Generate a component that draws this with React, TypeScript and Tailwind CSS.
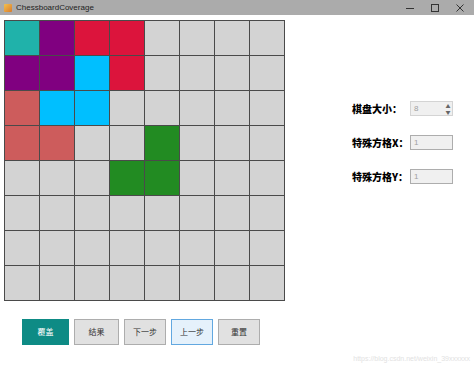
import React from "react";

// colours of the tiles, row by row
const L = "#d3d3d3";
const T = "#20b2aa";
const P = "#800080";
const C = "#dc143c";
const S = "#00bfff";
const R = "#cd5c5c";
const G = "#228b22";

const board: string[][] = [
  [T, P, C, C, L, L, L, L],
  [P, P, S, C, L, L, L, L],
  [R, S, S, L, L, L, L, L],
  [R, R, L, L, G, L, L, L],
  [L, L, L, G, G, L, L, L],
  [L, L, L, L, L, L, L, L],
  [L, L, L, L, L, L, L, L],
  [L, L, L, L, L, L, L, L],
];

const font = { fontFamily: '"Microsoft YaHei", "Noto Sans CJK SC", sans-serif' };

function Field({ label, value, spin }: { label: string; value: string; spin?: boolean }) {
  return (
    <div className="flex items-center h-[15px]">
      <span className="w-[58px] text-[10px] font-black text-black leading-none whitespace-nowrap">{label}</span>
      <div
        className={`flex items-center w-[43px] h-[15px] bg-[#f0f0f0] border ${
          spin ? "border-[#d4d4d4]" : "border-[#adadad]"
        }`}
      >
        <span className="flex-1 pl-[3px] text-[8px] text-[#a0a0a0] leading-none" style={{ fontFamily: '"Liberation Sans", sans-serif' }}>
          {value}
        </span>
        {spin && (
          <div className="flex flex-col items-center justify-center w-[8px] text-[5px] leading-[6px] text-[#666]">
            <span>▲</span>
            <span>▼</span>
          </div>
        )}
      </div>
    </div>
  );
}

const buttons = [
  { text: "覆盖", cls: "w-[47px] bg-[#0e8b85] border-[#0e8b85] text-white" },
  { text: "结果", cls: "w-[45px] bg-[#e1e1e1] border-[#adadad] text-[#333]" },
  { text: "下一步", cls: "w-[42px] bg-[#e1e1e1] border-[#adadad] text-[#333]" },
  { text: "上一步", cls: "w-[42px] bg-[#e5f1fb] border-[#62a8e0] text-[#333]" },
  { text: "重置", cls: "w-[42px] bg-[#e1e1e1] border-[#adadad] text-[#333]" },
];

export default function App() {
  return (
    <div className="w-[474px] h-[365px] bg-white flex flex-col overflow-hidden" style={font}>
      {/* title bar */}
      <div className="h-[15px] bg-[#ababab] flex items-center pl-[4px] pr-[10px] shrink-0">
        <div className="w-[8px] h-[8px] rounded-[1px] bg-gradient-to-br from-[#f2c14e] to-[#d97b2b] mr-[4px]" />
        <span className="text-[8px] text-[#222] leading-none" style={{ fontFamily: '"Liberation Sans", sans-serif' }}>
          ChessboardCoverage
        </span>
        <div className="ml-auto flex items-center gap-[17px] text-[#333]">
          <svg width="8" height="8" viewBox="0 0 8 8"><path d="M0 4.5h8" stroke="#333" strokeWidth="1" /></svg>
          <svg width="8" height="8" viewBox="0 0 8 8"><rect x="0.5" y="0.5" width="7" height="7" fill="none" stroke="#333" strokeWidth="1" /></svg>
          <svg width="8" height="8" viewBox="0 0 8 8"><path d="M0.5 0.5l7 7M7.5 0.5l-7 7" stroke="#333" strokeWidth="1" /></svg>
        </div>
      </div>

      {/* board + settings */}
      <div className="flex pt-[5px] pl-[4px]">
        <div className="grid grid-cols-[repeat(8,34px)] gap-px p-px bg-[#4a4a4a]">
          {board.flat().map((c, i) => (
            <div key={i} className="h-[34px]" style={{ background: c }} />
          ))}
        </div>
        <div className="ml-[67px] pt-[81px] flex flex-col gap-[19px]">
          <Field label="棋盘大小：" value="8" spin />
          <Field label="特殊方格X：" value="1" />
          <Field label="特殊方格Y：" value="1" />
        </div>
      </div>

      {/* buttons */}
      <div className="flex gap-[5px] pl-[22px] mt-[18px]">
        {buttons.map((b) => (
          <div
            key={b.text}
            className={`h-[26px] border flex items-center justify-center text-[8px] leading-none ${b.cls}`}
          >
            {b.text}
          </div>
        ))}
      </div>

      <div className="mt-auto mb-[3px] pr-[4px] text-right text-[7px] text-[#e2e2e2] leading-none" style={{ fontFamily: '"Liberation Sans", sans-serif' }}>
        https://blog.csdn.net/weixin_39xxxxxx
      </div>
    </div>
  );
}
